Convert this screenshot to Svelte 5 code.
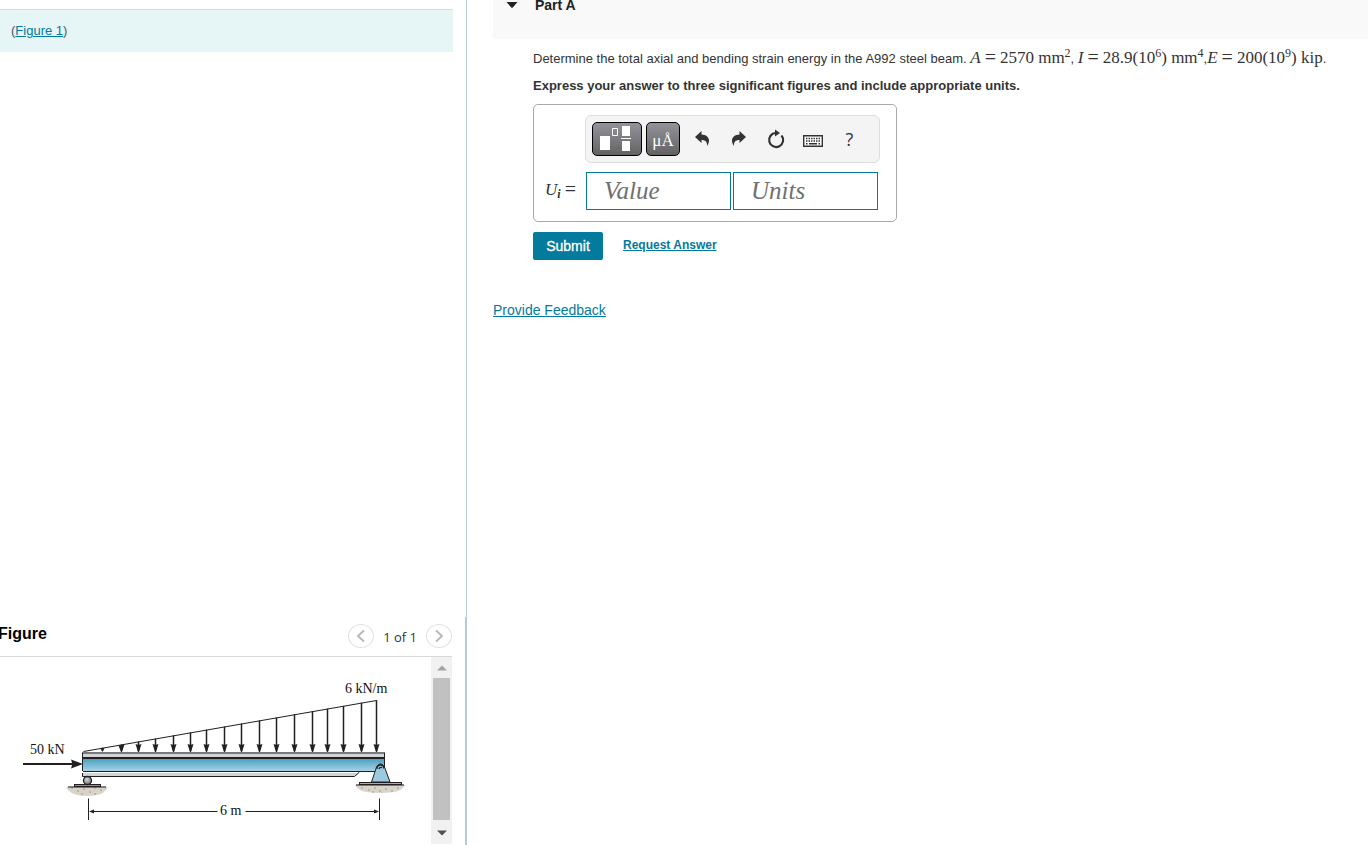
<script>
  const loads = [102, 121, 138, 155, 173, 190, 206, 224, 241, 259, 276, 294, 312, 327, 343, 361, 376];
  const beamTop = 752;
  const loadTop = (x) => 751 - ((x - 83) * 51) / 294;
  const specks = [[72, 787], [78, 790], [84, 788], [90, 791], [95, 787], [101, 789], [82, 793], [95, 793]];
  const specksRight = [[362, 787], [369, 789], [375, 787], [380, 790], [386, 788], [392, 790], [398, 787], [373, 791]];
  let value = $state('');
  let units = $state('');
</script>

<div class="page">
  <aside class="side">
    <div class="hint">(<a href="#figure">Figure 1</a>)</div>
    <section class="figure" id="figure">
      <header class="figure-head">
        <h2>Figure</h2>
        <nav class="pager" aria-label="Figures">
          <button class="round" aria-label="Previous figure">
            <svg width="10" height="14" viewBox="0 0 10 14"><path d="M8 1.500 2 7l6 5.500" /></svg>
          </button>
          <span>1 of 1</span>
          <button class="round" aria-label="Next figure">
            <svg width="10" height="14" viewBox="0 0 10 14"><path d="M2 1.500 8 7l-6 5.500" /></svg>
          </button>
        </nav>
      </header>
      <div class="viewer">
        <svg class="diagram" width="431" height="187" viewBox="0 657 431 187" role="img" aria-label="Beam with axial load and triangular distributed load">
          <defs>
            <linearGradient id="web" x1="0" y1="0" x2="0" y2="1">
              <stop offset="0" stop-color="#429dbf" /><stop offset="1" stop-color="#a8d2e4" />
            </linearGradient>
            <radialGradient id="ball" cx=".4" cy=".35" r=".7">
              <stop offset="0" stop-color="#d8d8da" /><stop offset="1" stop-color="#6d6e71" />
            </radialGradient>
          </defs>
          <text x="30" y="754">50 kN</text>
          <text x="345" y="693">6 kN/m</text>
          <text x="220" y="815">6 m</text>

          <path class="ink" d="M83.500 751.500 376.500 700.500" />
          {#each loads as x}
            <path class="ink bold" d="M{x + 0.5} {loadTop(x)}V{beamTop - 1}" />
            {#if x > 130}
              <path fill="#231f20" d="M{x - 2.5} 744q3 1.500 6 0L{x + 1} {beamTop}h-1z" />
            {:else if x > 110}
              <path fill="#231f20" d="M{x - 2.5} 745.500l6-1L{x + 1} {beamTop}h-1z" />
            {:else}
              <path fill="#231f20" d="M{x - 1.5} 748.500l4-.5L{x + 0.5} {beamTop}z" />
            {/if}
          {/each}

          <path class="ink thick" d="M23 764H73" />
          <path fill="#231f20" d="M71 759.500 83 764l-12 4.500q2-4.500 0-9z" />

          <rect x="82.500" y="752.500" width="302" height="5" fill="#d1d3d4" />
          <path stroke="#77787b" stroke-width="2" d="M82 753H385" />
          <rect x="83" y="758" width="302" height="13" fill="url(#web)" />
          <path stroke="#231f20" stroke-width="2" d="M82 758H385" />
          <path class="ink" d="M83 771.500H376M82.500 753V771M384.500 753V770" />
          <path fill="#d1d3d4" d="M83 773H359l-4 3.500H83z" />
          <path class="ink" d="M82.500 773V776.500H354.500L359.500 772" />

          <path fill="#d9d4c9" d="M66 787H108Q104 794 97 795 87 797 77 795 69 793 66 787z" />
          <g fill="#aba79d">{#each specks as [x, y]}<circle cx={x} cy={y + 1} r="0.900" />{/each}</g>
          <path stroke="#58595b" stroke-width="1.500" d="M68 787H106" />
          <rect x="74.500" y="784.500" width="26" height="2" fill="#6f9db2" stroke="#231f20" />
          <circle cx="87.500" cy="780.500" r="4" fill="url(#ball)" stroke="#231f20" stroke-width="1.300" />

          <path fill="#d9d4c9" d="M355 785H405Q401 792 393 792 380 794 367 792 358 791 355 785z" />
          <g fill="#aba79d">{#each specksRight as [x, y]}<circle cx={x} cy={y + 1} r="0.900" />{/each}</g>
          <path stroke="#58595b" stroke-width="1.500" d="M356 785H404" />
          <rect x="359.500" y="782.500" width="42" height="2" fill="#83b9d3" stroke="#231f20" />
          <path fill="#9bc9de" stroke="#231f20" d="M371.500 782 376.500 767Q380.500 760.500 384.500 767L390 782z" />
          <path fill="none" stroke="#231f20" stroke-width="1.300" d="M377 769q0-4 3.500-4t3 3.500M379 769q.5-2 3-1.500" />

          <path class="ink" d="M88.500 798.500V820M379.500 798.500V820M91 811.500H217.500M245.500 811.500H377" />
          <path fill="#231f20" d="M89 811.500l5-2v4zM379 811.500l-5-2v4z" />
        </svg>
        <div class="scrollbar">
          <button aria-label="Scroll up"><svg width="10" height="6" viewBox="0 0 10 6"><path fill="#a3a3a3" d="M0 5.500 5 .5l5 5z" /></svg></button>
          <div class="thumb"></div>
          <button aria-label="Scroll down"><svg width="10" height="6" viewBox="0 0 10 6"><path fill="#505050" d="M0 .5h10l-5 5z" /></svg></button>
        </div>
      </div>
    </section>
  </aside>

  <main class="main">
    <header class="part">
      <button class="toggle" aria-label="Collapse Part A"><svg width="12" height="6" viewBox="0 0 12 6"><path fill="#222" d="M.5 0h11L7 5.300q-1 1-2 0z" /></svg></button>
      <h1>Part A</h1>
    </header>
    <div class="body">
      <p class="question">Determine the total axial and bending strain energy in the A992 steel beam. <span class="math"><i>A</i><b>=</b>2570 mm<sup>2</sup></span>, <span class="math"><i>I</i><b>=</b>28.9(10<sup>6</sup>) mm<sup>4</sup></span>,<span class="math"><i>E</i><b>=</b>200(10<sup>9</sup>) kip</span>.</p>
      <p class="instruction">Express your answer to three significant figures and include appropriate units.</p>

      <div class="answer">
        <div class="toolbar" role="toolbar" aria-label="Equation tools">
          <button class="dark wide" aria-label="Templates">
            <svg width="34" height="28" viewBox="0 0 34 28"><path fill="#fff" d="M0 11h10v14H0zM22 1h8v10h-8zM22 16h8v10h-8zM21 13h10v1H21z" /><path fill="none" stroke="#fff" d="M12.500 3.500h5v7h-5z" /></svg>
          </button>
          <button class="dark" aria-label="Units symbols">μÅ</button>
          <div class="tools">
            <button class="tool" aria-label="Undo"><svg width="16" height="18" viewBox="0 0 16 18"><path fill="#333" d="M1 7 7.500 1v3.500C12 4.800 15 7 15 10.500c0 2-.8 4-2 5.500.4-4-1.500-6-5.500-6V13z" /></svg></button>
            <button class="tool" aria-label="Redo"><svg width="16" height="18" viewBox="0 0 16 18"><path fill="#333" d="M15 7 8.500 1v3.500C4 4.800 1 7 1 10.500c0 2 .8 4 2 5.500-.4-4 1.500-6 5.500-6V13z" /></svg></button>
            <button class="tool" aria-label="Reset"><svg width="18" height="20" viewBox="0 0 18 20"><path fill="none" stroke="#333" stroke-width="2.200" d="M9 4A7 7 0 1 0 14.500 6.500" /><path fill="#333" d="M8 .5 13 4 8 7.500z" /></svg></button>
            <button class="tool" aria-label="Keyboard"><svg width="20" height="16" viewBox="0 0 20 16"><path fill="#fff" stroke="#333" stroke-width="1.400" d="M.7 4.700h18.600v10.600H.7z" /><path stroke="#333" stroke-width="1.500" stroke-dasharray="1.500 1" d="M3 7.500h14M3 10h14" /><path stroke="#333" stroke-width="1.500" d="M3 12.800h1.500M6 12.800h8M15.500 12.800H17" /></svg></button>
            <button class="tool help" aria-label="Help">?</button>
          </div>
        </div>
        <label for="value" class="symbol"><i>U<sub>i</sub></i><b>=</b></label>
        <div class="fields">
          <input id="value" placeholder="Value" bind:value />
          <input aria-label="Units" placeholder="Units" bind:value={units} />
        </div>
      </div>

      <div class="actions">
        <button class="submit">Submit</button>
        <a href="#answer">Request Answer</a>
      </div>
    </div>
    <a class="feedback" href="#feedback">Provide Feedback</a>
  </main>
</div>

<style>
  :global(body) { background: #fff; }
  .page { display: grid; grid-template-columns: 467px minmax(0, 1fr); min-height: 100vh; font-family: "Liberation Sans", Arial, sans-serif; color: #333; overflow: hidden; }
  button { border: 0; padding: 0; background: none; font: inherit; color: inherit; display: flex; align-items: center; justify-content: center; }
  a { color: #047a9c; }
  h1, h2, p { margin: 0; }
  .side { display: flex; flex-direction: column; justify-content: space-between; background: linear-gradient(#b7cad9, #b7cad9) right / 1px 100% no-repeat; }
  .hint { margin: 9px 14px 0 0; padding: 12px 11px; border-top: 1px solid #d9dcdc; background: #e6f5f5; font-size: 13px; line-height: 18px; color: #555; }
  .figure { border-right: 2px solid #b7cadb; padding-right: 13px; }
  .figure-head { display: flex; align-items: center; justify-content: space-between; height: 39px; border-bottom: 1px solid #d9d9d9; }
  .figure-head h2 { margin: 0 0 6px -2px; font-size: 16px; line-height: 20px; color: #000; }
  .pager { display: flex; align-items: center; gap: 9px; font: 13px/18px "Open Sans", sans-serif; }
  .round { width: 26px; height: 24px; margin-bottom: 1px; border: 1px solid #e2e2e2; border-radius: 50%; }
  .round path { fill: none; stroke: #b9b9b9; stroke-width: 2; }
  .viewer { display: flex; justify-content: space-between; padding-bottom: 1px; }
  .diagram { display: block; }
  .diagram text { font: 14px "Liberation Serif", serif; fill: #111; }
  .ink { fill: none; stroke: #231f20; stroke-width: 1; }
  .bold { stroke-width: 1.5; }
  .thick { stroke-width: 2; }
  .scrollbar { width: 21px; display: flex; flex-direction: column; background: #f1f1f1; }
  .scrollbar button { height: 22px; flex: none; }
  .thumb { flex: 1; margin: -1px 2px 2px; background: #c1c1c1; }

  .main { padding-left: 26px; }
  .part { display: flex; gap: 17px; height: 39px; padding-left: 13px; background: #f9f9f9; }
  .part h1 { margin-top: -4px; font-size: 14px; line-height: 18px; color: #222; }
  .toggle { height: 10px; }
  .body { padding: 9px 0 0 40px; }
  .question { font-size: 13px; line-height: 20px; white-space: nowrap; }
  .math { font: 17px/20px "Liberation Serif", serif; }
  .math b, .symbol b { margin: 0 4px; font-weight: 400; font-size: 20px; line-height: 16px; vertical-align: -1px; }
  .math sup { font-size: 12px; line-height: 0; vertical-align: 6px; }
  .instruction { margin-top: 8px; font-size: 13px; line-height: 18px; font-weight: 700; }
  .answer { display: grid; grid-template-columns: 40px 295px; row-gap: 9px; width: max-content; margin-top: 9px; padding: 10px 16px 11px 11px; border: 1px solid #aaa; border-radius: 5px; }
  .toolbar { grid-column: 2; display: flex; align-items: center; gap: 4px; box-sizing: border-box; height: 48px; padding-left: 6px; border: 1px solid #ddd; border-radius: 6px; background: #f4f4f4; }
  .dark { box-sizing: border-box; width: 34px; height: 34px; padding-top: 4px; border: 1px solid #000; border-radius: 5px; background: linear-gradient(#94939b, #636363); color: #fff; font: 17px/28px "Liberation Serif", serif; }
  .wide { width: 50px; padding-top: 0; }
  .tools { display: flex; margin-left: -1px; }
  .tool { width: 37px; height: 34px; }
  .help { font: 18px "Open Sans", sans-serif; }
  .symbol { align-self: center; padding-bottom: 2px; font: 17px/20px "Liberation Serif", serif; white-space: nowrap; }
  .symbol sub { font-size: 12px; font-weight: 700; line-height: 0; vertical-align: -3px; }
  .fields { display: flex; gap: 2px; padding: 0 2px 0 1px; }
  .fields input { flex: 1; min-width: 0; box-sizing: border-box; height: 38px; padding: 0 17px; border: 1px solid #047a9c; border-radius: 0; font: italic 25px "Liberation Serif", serif; }
  .fields input::placeholder { color: #6f6f6f; opacity: 1; }
  .actions { display: flex; gap: 20px; margin-top: 10px; }
  .submit { width: 70px; height: 28px; border-radius: 2px; background: #047a9c; color: #fff; font-size: 14px; -webkit-text-stroke: 0.3px #fff; }
  .actions a { font-size: 12px; line-height: 26px; font-weight: 700; }
  .feedback { display: inline-block; margin-top: 41px; font-size: 14px; line-height: 18px; }
</style>
